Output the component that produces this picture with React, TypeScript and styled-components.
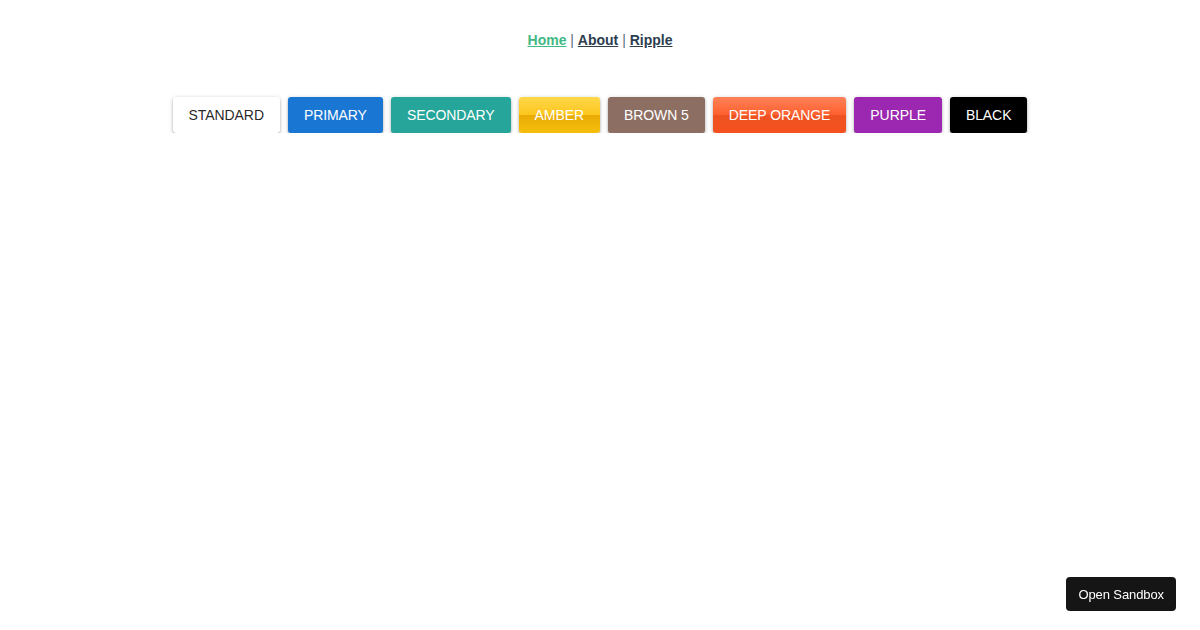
import React from "react";
import styled, { createGlobalStyle, css } from "styled-components";

const Global = createGlobalStyle`
  html, body { margin: 0; padding: 0; background: #fff; }
  body { font-family: "Liberation Sans", Arial, Helvetica, sans-serif; }
`;

const AppWrap = styled.div`
  text-align: center;
  color: #2c3e50;
  -webkit-font-smoothing: antialiased;
`;

const Nav = styled.nav`
  padding: 30px 30px 0;
  font-size: 14px;
  line-height: 20px;
  font-weight: bold;
`;

const NavLink = styled.a<{ $active?: boolean }>`
  color: ${(p) => (p.$active ? "#42b983" : "#2c3e50")};
  text-decoration: underline;
  cursor: pointer;
`;

const Sep = styled.span`
  font-weight: normal;
  color: #5a6d80;
`;

const Row = styled.div`
  display: flex;
  justify-content: center;
  gap: 8px;
  margin-top: 47px;
`;

type Variant = {
  bg: string;
  fg: string;
  glossy?: [string, string, string, string];
};

const Btn = styled.button<{ $v: Variant }>`
  height: 36px;
  padding: 0 16px;
  border: none;
  border-radius: 3px;
  font-family: "Liberation Sans", Arial, sans-serif;
  font-size: 14px;
  letter-spacing: -0.08px;
  text-transform: uppercase;
  color: ${(p) => p.$v.fg};
  background: ${(p) => p.$v.bg};
  box-shadow: 0 2px 2px 0 rgba(0, 0, 0, 0.2), 0 3px 1px -2px rgba(0, 0, 0, 0.24),
    0 1px 4px 0 rgba(0, 0, 0, 0.22);
  cursor: pointer;
  ${(p) =>
    p.$v.glossy &&
    css`
      background: linear-gradient(
        to bottom,
        ${p.$v.glossy[0]} 0%,
        ${p.$v.glossy[1]} 50%,
        ${p.$v.glossy[2]} 51%,
        ${p.$v.glossy[3]} 100%
      );
    `}
`;

const Sandbox = styled.button`
  position: fixed;
  right: 24px;
  bottom: 19px;
  height: 34px;
  padding: 0 12px 0 12px;
  border: none;
  border-radius: 4px;
  background: #151515;
  color: #fff;
  font-family: "Liberation Sans", Arial, sans-serif;
  font-size: 13px;
  letter-spacing: -0.1px;
  box-shadow: 0 0 0 1px rgba(255, 255, 255, 0.08);
`;

const buttons: { label: string; v: Variant }[] = [
  { label: "Standard", v: { bg: "#ffffff", fg: "rgba(0,0,0,0.87)" } },
  { label: "Primary", v: { bg: "#1976d2", fg: "#fff" } },
  { label: "Secondary", v: { bg: "#26a69a", fg: "#fff" } },
  {
    label: "Amber",
    v: { bg: "#ffc107", fg: "#fff", glossy: ["#ffd84a", "#fdc51e", "#e9ab06", "#f6bf0d"] },
  },
  { label: "Brown 5", v: { bg: "#8d6e63", fg: "#fff" } },
  {
    label: "Deep Orange",
    v: { bg: "#ff5722", fg: "#fff", glossy: ["#ff8259", "#ff5f2e", "#ee5221", "#f4511e"] },
  },
  { label: "Purple", v: { bg: "#9c27b0", fg: "#fff" } },
  { label: "Black", v: { bg: "#000000", fg: "#fff" } },
];

export default function App() {
  return (
    <AppWrap>
      <Global />
      <Nav>
        <NavLink $active>Home</NavLink>
        <Sep> | </Sep>
        <NavLink>About</NavLink>
        <Sep> | </Sep>
        <NavLink>Ripple</NavLink>
      </Nav>
      <Row>
        {buttons.map((b) => (
          <Btn key={b.label} $v={b.v}>
            {b.label}
          </Btn>
        ))}
      </Row>
      <Sandbox>Open Sandbox</Sandbox>
    </AppWrap>
  );
}
